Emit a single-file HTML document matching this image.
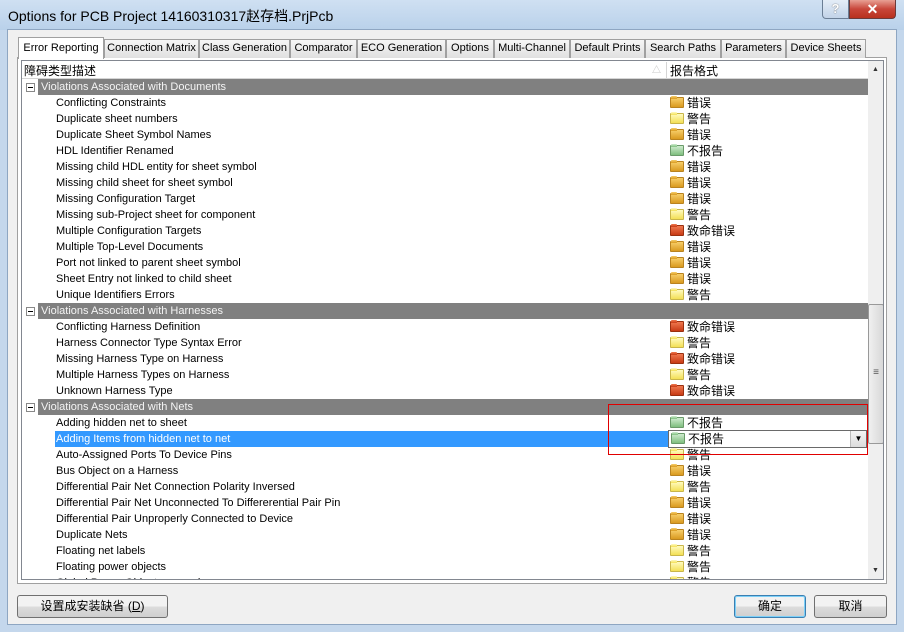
<!DOCTYPE html>
<html><head><meta charset="utf-8"><style>
*{margin:0;padding:0;box-sizing:border-box}
body{width:904px;height:632px;overflow:hidden;background:#c4d7ec;font-family:"Liberation Sans","Noto Sans CJK SC",sans-serif;font-size:11px;color:#000;position:relative}
.abs{position:absolute}
#tb{left:0;top:0;width:904px;height:30px;background:linear-gradient(#cfe0f2,#b9d1ea)}
#title{left:8px;top:6px;font-size:14px;color:#000}
#client{left:7px;top:29px;width:890px;height:596px;background:#f0f0f0;border:1px solid #8ea6c2}
.tab{position:absolute;top:39px;height:19px;border:1px solid #a0a0a0;border-bottom:none;background:linear-gradient(#f6f6f6,#e0e0e0);font-size:11px;text-align:center;line-height:17px;white-space:nowrap}
.tab.sel{top:37px;height:22px;background:#fff;z-index:3;line-height:20px}
#page{left:17px;top:57px;width:870px;height:527px;border:1px solid #a0a0a0;background:#fff}
#list{left:21px;top:60px;width:863px;height:520px;border:1px solid #828790;background:#fff;overflow:hidden}
#hdr{left:0;top:0;width:846px;height:18px;border-bottom:1px solid #d5d5d5;background:#fff;font-size:12px}
.row{position:absolute;left:0;height:16px;width:846px;line-height:16px;white-space:nowrap}
.grp{position:absolute;left:16px;width:830px;height:16px;background:#808080;color:#f4f4f4;padding-left:3px;line-height:16px}
.mb{position:absolute;left:4px;top:4px;width:9px;height:9px;border:1px solid #888;background:#fff}
.mb:after{content:"";position:absolute;left:1px;top:3px;width:5px;height:1px;background:#000}
.it{position:absolute;left:34px}
.st{position:absolute;left:648px;font-size:12px}
.f{display:inline-block;width:14px;height:11px;margin-right:3px;vertical-align:-1px;border-radius:1px;position:relative}
.f:before{content:"";position:absolute;left:0;top:-2px;width:6px;height:3px;border-radius:1px 1px 0 0;background:inherit}
.e{background:linear-gradient(#f7cf6a,#d99a20);border:1px solid #b98320}
.w{background:linear-gradient(#fffbc0,#f3df55);border:1px solid #c9b64a}
.n{background:linear-gradient(#cfeccf,#7fbf7f);border:1px solid #6a9a6a}
.x{background:linear-gradient(#f07a50,#c83a15);border:1px solid #9a3010}
#sb{left:846px;top:0;width:16px;height:518px;background:#efefef}
.btn{position:absolute;height:23px;border:1px solid #707070;border-radius:3px;background:linear-gradient(#f2f2f2 50%,#dcdcdc 50%,#cfcfcf);text-align:center;line-height:21px;font-size:12px}
</style></head><body>
<div id="tb" class="abs"></div>
<div id="title" class="abs">Options for PCB Project 14160310317赵存档.PrjPcb</div>
<div class="abs" style="left:822px;top:0;width:27px;height:19px;border:1px solid #6b7e95;border-top:none;border-radius:0 0 0 4px;background:linear-gradient(#e4edf7,#c2d3e8);text-align:center;color:#fff;font-weight:bold;font-size:13px;line-height:18px;text-shadow:0 0 1px #333">?</div>
<div class="abs" style="left:849px;top:0;width:47px;height:19px;border:1px solid #6b3a3a;border-top:none;border-radius:0 0 4px 0;background:linear-gradient(#e8a094,#c8463a 50%,#b8301e);text-align:center;color:#fff;font-weight:bold;font-size:14px;line-height:18px">✕</div>
<div id="client" class="abs"></div>
<div id="page" class="abs"></div>
<div class="tab sel" style="left:18px;width:86px">Error Reporting</div>
<div class="tab" style="left:104px;width:95px">Connection Matrix</div>
<div class="tab" style="left:199px;width:91px">Class Generation</div>
<div class="tab" style="left:290px;width:67px">Comparator</div>
<div class="tab" style="left:357px;width:89px">ECO Generation</div>
<div class="tab" style="left:446px;width:48px">Options</div>
<div class="tab" style="left:494px;width:76px">Multi-Channel</div>
<div class="tab" style="left:570px;width:75px">Default Prints</div>
<div class="tab" style="left:645px;width:76px">Search Paths</div>
<div class="tab" style="left:721px;width:65px">Parameters</div>
<div class="tab" style="left:786px;width:80px">Device Sheets</div>
<div id="list" class="abs">
<div id="hdr" class="abs"><span class="abs" style="left:2px;top:1px">障碍类型描述</span><span class="abs" style="left:630px;top:2px;color:#bbb;font-size:9px">△</span><div class="abs" style="left:644px;top:1px;width:1px;height:16px;background:#d5d5d5"></div><span class="abs" style="left:648px;top:1px">报告格式</span></div>
<div class="row" style="top:18px"><div class="mb"></div><div class="grp">Violations Associated with Documents</div></div>
<div class="row" style="top:34px"><span class="it">Conflicting Constraints</span><span class="st"><i class="f e"></i>错误</span></div>
<div class="row" style="top:50px"><span class="it">Duplicate sheet numbers</span><span class="st"><i class="f w"></i>警告</span></div>
<div class="row" style="top:66px"><span class="it">Duplicate Sheet Symbol Names</span><span class="st"><i class="f e"></i>错误</span></div>
<div class="row" style="top:82px"><span class="it">HDL Identifier Renamed</span><span class="st"><i class="f n"></i>不报告</span></div>
<div class="row" style="top:98px"><span class="it">Missing child HDL entity for sheet symbol</span><span class="st"><i class="f e"></i>错误</span></div>
<div class="row" style="top:114px"><span class="it">Missing child sheet for sheet symbol</span><span class="st"><i class="f e"></i>错误</span></div>
<div class="row" style="top:130px"><span class="it">Missing Configuration Target</span><span class="st"><i class="f e"></i>错误</span></div>
<div class="row" style="top:146px"><span class="it">Missing sub-Project sheet for component</span><span class="st"><i class="f w"></i>警告</span></div>
<div class="row" style="top:162px"><span class="it">Multiple Configuration Targets</span><span class="st"><i class="f x"></i>致命错误</span></div>
<div class="row" style="top:178px"><span class="it">Multiple Top-Level Documents</span><span class="st"><i class="f e"></i>错误</span></div>
<div class="row" style="top:194px"><span class="it">Port not linked to parent sheet symbol</span><span class="st"><i class="f e"></i>错误</span></div>
<div class="row" style="top:210px"><span class="it">Sheet Entry not linked to child sheet</span><span class="st"><i class="f e"></i>错误</span></div>
<div class="row" style="top:226px"><span class="it">Unique Identifiers Errors</span><span class="st"><i class="f w"></i>警告</span></div>
<div class="row" style="top:242px"><div class="mb"></div><div class="grp">Violations Associated with Harnesses</div></div>
<div class="row" style="top:258px"><span class="it">Conflicting Harness Definition</span><span class="st"><i class="f x"></i>致命错误</span></div>
<div class="row" style="top:274px"><span class="it">Harness Connector Type Syntax Error</span><span class="st"><i class="f w"></i>警告</span></div>
<div class="row" style="top:290px"><span class="it">Missing Harness Type on Harness</span><span class="st"><i class="f x"></i>致命错误</span></div>
<div class="row" style="top:306px"><span class="it">Multiple Harness Types on Harness</span><span class="st"><i class="f w"></i>警告</span></div>
<div class="row" style="top:322px"><span class="it">Unknown Harness Type</span><span class="st"><i class="f x"></i>致命错误</span></div>
<div class="row" style="top:338px"><div class="mb"></div><div class="grp">Violations Associated with Nets</div></div>
<div class="row" style="top:354px"><span class="it">Adding hidden net to sheet</span><span class="st"><i class="f n"></i>不报告</span></div>
<div class="row" style="top:370px"><div class="abs" style="left:33px;top:0;width:614px;height:16px;background:#3399ff"></div><span class="it" style="color:#fff">Adding Items from hidden net to net</span>
<div class="abs" style="left:646px;top:-1px;width:199px;height:18px;border:1px solid #6a6a6a;background:#fff;padding-left:2px;line-height:16px;font-size:12px"><i class="f n"></i>不报告<div class="abs" style="right:0;top:0;width:16px;height:16px;background:linear-gradient(#f4f4f4,#dcdcdc);border-left:1px solid #bbb;text-align:center;font-size:8px;line-height:16px">▼</div></div></div>
<div class="row" style="top:386px"><span class="it">Auto-Assigned Ports To Device Pins</span><span class="st"><i class="f w"></i>警告</span></div>
<div class="row" style="top:402px"><span class="it">Bus Object on a Harness</span><span class="st"><i class="f e"></i>错误</span></div>
<div class="row" style="top:418px"><span class="it">Differential Pair Net Connection Polarity Inversed</span><span class="st"><i class="f w"></i>警告</span></div>
<div class="row" style="top:434px"><span class="it">Differential Pair Net Unconnected To Differerential Pair Pin</span><span class="st"><i class="f e"></i>错误</span></div>
<div class="row" style="top:450px"><span class="it">Differential Pair Unproperly Connected to Device</span><span class="st"><i class="f e"></i>错误</span></div>
<div class="row" style="top:466px"><span class="it">Duplicate Nets</span><span class="st"><i class="f e"></i>错误</span></div>
<div class="row" style="top:482px"><span class="it">Floating net labels</span><span class="st"><i class="f w"></i>警告</span></div>
<div class="row" style="top:498px"><span class="it">Floating power objects</span><span class="st"><i class="f w"></i>警告</span></div>
<div class="row" style="top:514px"><span class="it">Global Power Object scope changes</span><span class="st"><i class="f w"></i>警告</span></div>
<div id="sb" class="abs">
<div class="abs" style="left:4px;top:5px;font-size:7px;color:#333">▲</div>
<div class="abs" style="left:0;top:243px;width:16px;height:140px;border:1px solid #999;border-radius:2px;background:linear-gradient(90deg,#f0f0f0,#d8d8d8);text-align:center;line-height:136px;font-size:10px;color:#555">≡</div>
<div class="abs" style="left:4px;top:506px;font-size:7px;color:#333">▼</div>
</div>
</div>
<div class="abs" style="left:608px;top:404px;width:260px;height:51px;border:1px solid #e00000"></div>
<div class="btn" style="left:17px;top:595px;width:151px">设置成安装缺省 (<u>D</u>)</div>
<div class="btn" style="left:734px;top:595px;width:72px;border-color:#3c7fb1;box-shadow:inset 0 0 0 1px #7cd0f8">确定</div>
<div class="btn" style="left:814px;top:595px;width:73px">取消</div>
</body></html>
